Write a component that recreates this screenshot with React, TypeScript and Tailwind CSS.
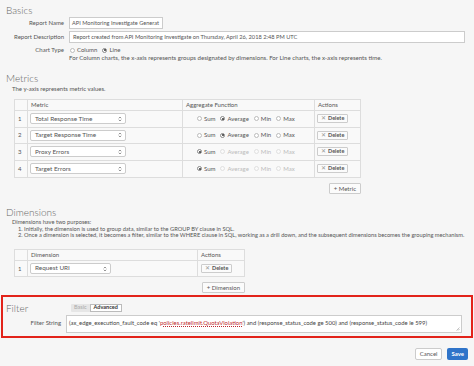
import React from "react";

type Metric = { name: string; agg: "Sum" | "Average" };

const metrics: Metric[] = [
  { name: "Total Response Time", agg: "Average" },
  { name: "Target Response Time", agg: "Average" },
  { name: "Proxy Errors", agg: "Sum" },
  { name: "Target Errors", agg: "Sum" },
];

function Radio({ checked, disabled }: { checked?: boolean; disabled?: boolean }) {
  return (
    <span
      className={`inline-flex h-[5px] w-[5px] shrink-0 items-center justify-center rounded-full border ${
        disabled ? "border-[#e0e0e0] bg-[#fafafa]" : checked ? "border-[#888] bg-white" : "border-[#bbb] bg-white"
      }`}
    >
      {checked && <span className="h-[2px] w-[2px] rounded-full bg-[#333]" />}
    </span>
  );
}

function Option({ label, checked, disabled }: { label: string; checked?: boolean; disabled?: boolean }) {
  return (
    <span className="inline-flex items-center gap-[2px]">
      <Radio checked={checked} disabled={disabled} />
      <span className={disabled ? "text-[#bbb]" : "text-[#555]"}>{label}</span>
    </span>
  );
}

function Arrows() {
  return (
    <svg width="4" height="6" viewBox="0 0 4 6" className="shrink-0">
      <path d="M0.8 2.3 L2 1 L3.2 2.3 M0.8 3.7 L2 5 L3.2 3.7" fill="none" stroke="#666" strokeWidth="0.7" />
    </svg>
  );
}

function Select({ value, width }: { value: string; width: string }) {
  return (
    <div
      className={`flex h-[11px] items-center justify-between rounded-[2px] border border-[#ccc] bg-white pl-[4px] pr-[3px] ${width}`}
    >
      <span className="text-[6.4px] text-[#555]">{value}</span>
      <Arrows />
    </div>
  );
}

function DeleteButton() {
  return (
    <div className="inline-flex h-[9px] items-center gap-[2px] rounded-[1px] border border-[#ccc] bg-[#fbfbfb] px-[3px] text-[5.5px]">
      <span className="text-[#999]">✕</span>
      <span className="font-bold text-[#555]">Delete</span>
    </div>
  );
}

function SmallButton({ label }: { label: string }) {
  return (
    <div className="flex h-[11px] items-center rounded-[1px] border border-[#ccc] bg-[#fbfbfb] px-[4px] text-[#555]">
      {label}
    </div>
  );
}

function Heading({ children }: { children: React.ReactNode }) {
  return <h2 className="flex h-[14px] items-center text-[10px] font-light leading-none text-[#666]">{children}</h2>;
}

export default function App() {
  return (
    <div className="h-[366px] w-[474px] overflow-hidden bg-[#f6f6f6] pt-[3px] font-['Lato','Liberation_Sans',sans-serif] text-[6px] leading-none text-[#555]">
      {/* Basics */}
      <div className="px-[6px]">
        <Heading>Basics</Heading>
        <div className="flex h-[12px] items-center">
          <label className="w-[63px] pr-[5px] text-right">Report Name</label>
          <div className="flex h-[12px] w-[94px] items-center whitespace-nowrap border border-[#ccc] bg-white px-[2px] text-[5.6px]">
            API Monitoring Investigate Generat
          </div>
        </div>
        <div className="mt-[2px] flex h-[12px] items-center">
          <label className="w-[63px] pr-[5px] text-right">Report Description</label>
          <div className="flex h-[12px] w-[396px] items-center whitespace-nowrap border border-[#ccc] bg-white px-[3px] text-[5.7px]">
            Report created from API Monitoring Investigate on Thursday, April 26, 2018 2:48 PM UTC
          </div>
        </div>
        <div className="mt-[3px] flex h-[8px] items-center">
          <label className="w-[63px] pr-[5px] text-right">Chart Type</label>
          <div className="flex items-center gap-[5px] pl-[1px]">
            <Option label="Column" />
            <Option label="Line" checked />
          </div>
        </div>
        <p className="ml-[63px] flex h-[9px] items-center whitespace-nowrap text-[6.1px]">
          For Column charts, the x-axis represents groups designated by dimensions. For Line charts, the x-axis
          represents time.
        </p>
      </div>

      {/* Metrics */}
      <div className="mt-[8px] px-[6px]">
        <Heading>Metrics</Heading>
        <p className="flex h-[8px] items-center pl-[6px]">The y-axis represents metric values.</p>
        <div className="ml-[8px] mt-[6px] w-[347px] border border-[#ddd] bg-[#f9f9f9]">
          <div className="grid h-[11px] grid-cols-[13px_155px_132px_1fr] border-b border-[#ddd]">
            <div className="border-r border-[#ddd]" />
            <div className="flex items-center border-r border-[#ddd] pl-[3px]">Metric</div>
            <div className="flex items-center border-r border-[#ddd] pl-[3px]">Aggregate Function</div>
            <div className="flex items-center pl-[3px]">Actions</div>
          </div>
          {metrics.map((m, i) => (
            <div
              key={m.name}
              className={`grid h-[16.5px] grid-cols-[13px_155px_132px_1fr] ${i < metrics.length - 1 ? "border-b border-[#ddd]" : ""}`}
            >
              <div className="flex items-center border-r border-[#ddd] pl-[3px]">{i + 1}</div>
              <div className="flex items-center border-r border-[#ddd] pl-[2px]">
                <Select value={m.name} width="w-[96px]" />
              </div>
              <div className="flex items-center gap-[5px] border-r border-[#ddd] pl-[14px]">
                <Option label="Sum" checked={m.agg === "Sum"} />
                <Option label="Average" checked={m.agg === "Average"} disabled={m.agg === "Sum"} />
                <Option label="Min" disabled={m.agg === "Sum"} />
                <Option label="Max" disabled={m.agg === "Sum"} />
              </div>
              <div className="flex items-center pl-[2px]">
                <DeleteButton />
              </div>
            </div>
          ))}
        </div>
        <div className="mt-[5px] flex w-[355px] justify-end">
          <SmallButton label="+ Metric" />
        </div>
      </div>

      {/* Dimensions */}
      <div className="mt-[11px] px-[6px]">
        <Heading>Dimensions</Heading>
        <div className="whitespace-nowrap pl-[6px] text-[5.7px] leading-[6.5px]">
          <p>Dimensions have two purposes:</p>
          <ol className="pl-[6px]">
            <li>1. Initially, the dimension is used to group data, similar to the GROUP BY clause in SQL.</li>
            <li>
              2. Once a dimension is selected, it becomes a filter, similar to the WHERE clause in SQL, working as a
              drill down, and the subsequent dimensions becomes the grouping mechanism.
            </li>
          </ol>
        </div>
        <div className="ml-[8px] mt-[10px] w-[231px] border border-[#ddd] bg-[#f9f9f9]">
          <div className="grid h-[11.5px] grid-cols-[13px_170px_1fr] border-b border-[#ddd]">
            <div className="border-r border-[#ddd]" />
            <div className="flex items-center border-r border-[#ddd] pl-[3px]">Dimension</div>
            <div className="flex items-center pl-[3px]">Actions</div>
          </div>
          <div className="grid h-[15px] grid-cols-[13px_170px_1fr]">
            <div className="flex items-center border-r border-[#ddd] pl-[3px]">1</div>
            <div className="flex items-center border-r border-[#ddd] pl-[2px]">
              <Select value="Request URI" width="w-[81px]" />
            </div>
            <div className="flex items-center pl-[3px]">
              <DeleteButton />
            </div>
          </div>
        </div>
        <div className="mt-[5px] flex w-[239px] justify-end">
          <SmallButton label="+ Dimension" />
        </div>
      </div>

      {/* Filter */}
      <div className="ml-[1px] mt-[2px] h-[43px] w-[472px] border-2 border-[#e2231a] pl-[3px] pt-[4px]">
        <div className="flex h-[14px] items-center">
          <h2 className="w-[65px] text-[10px] font-light text-[#666]">Filter</h2>
          <div className="flex h-[8px] items-center rounded-[1px] bg-[#e6e6e6] pl-[3px] text-[5.5px]">
            <span className="pr-[3px] text-[#aaa]">Basic</span>
            <span className="flex h-[8px] items-center border border-[#bbb] bg-white px-[3px] font-bold text-[#333]">
              Advanced
            </span>
          </div>
        </div>
        <div className="flex">
          <label className="w-[60px] pr-[5px] pt-[5px] text-right">Filter String</label>
          <div className="relative h-[18px] w-[396px] whitespace-nowrap border border-[#ccc] bg-white px-[2px] pt-[4px] text-[5.9px] text-[#444]">
            (ax_edge_execution_fault_code eq '
            <span className="text-[#c0282e] underline decoration-dotted">policies.ratelimit.QuotaViolation</span>
            ') and (response_status_code ge 500) and (response_status_code le 599)
            <svg width="4" height="4" viewBox="0 0 4 4" className="absolute bottom-[1px] right-[1px]">
              <path d="M0.5 3.5 L3.5 0.5 M2 3.5 L3.5 2" stroke="#999" strokeWidth="0.6" />
            </svg>
          </div>
        </div>
      </div>

      {/* Actions */}
      <div className="mt-[10px] flex justify-end gap-[5px] pr-[6px]">
        <div className="flex h-[12px] items-center rounded-[2px] border border-[#ccc] bg-white px-[4px] text-[#555]">
          Cancel
        </div>
        <div className="flex h-[12px] items-center rounded-[2px] bg-[#2f74c9] px-[4px] font-bold text-white">
          Save
        </div>
      </div>
    </div>
  );
}
